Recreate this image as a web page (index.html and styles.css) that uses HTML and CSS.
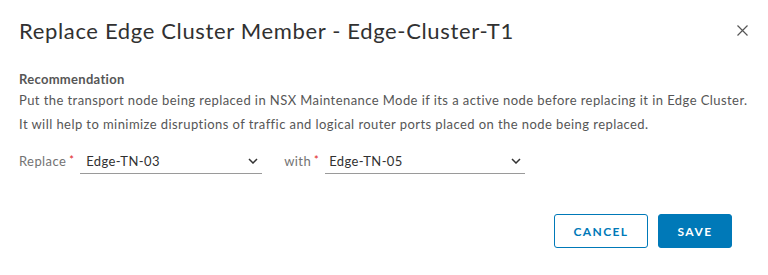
FILE: index.html
```html
<!DOCTYPE html>
<html lang="en">
<head>
  <meta charset="UTF-8">
  <title>Replace Edge Cluster Member</title>
  <link rel="stylesheet" href="styles.css">
</head>
<body>
  <div class="modal">
    <div class="modal-header">
      <h3 class="modal-title">Replace Edge Cluster Member - Edge-Cluster-T1</h3>
      <button class="close" aria-label="Close">
        <svg width="11" height="11" viewBox="0 0 11 11"><path d="M0.5 0.5L10.5 10.5M10.5 0.5L0.5 10.5" stroke="#565656" stroke-width="1.2" fill="none"/></svg>
      </button>
    </div>
    <div class="modal-body">
      <div class="rec-title">Recommendation</div>
      <p class="rec-text">Put the transport node being replaced in NSX Maintenance Mode if its a active node before replacing it in Edge Cluster.</p>
      <p class="rec-text">It will help to minimize disruptions of traffic and logical router ports placed on the node being replaced.</p>
      <div class="form-row">
        <label class="label">Replace<span class="req">*</span></label>
        <div class="select select-first">
          <span>Edge-TN-03</span>
          <svg width="10" height="6" viewBox="0 0 10 6"><path d="M1 1L5 5L9 1" stroke="#333" stroke-width="1.5" fill="none"/></svg>
        </div>
        <label class="label label-with">with<span class="req">*</span></label>
        <div class="select select-second">
          <span>Edge-TN-05</span>
          <svg width="10" height="6" viewBox="0 0 10 6"><path d="M1 1L5 5L9 1" stroke="#333" stroke-width="1.5" fill="none"/></svg>
        </div>
      </div>
    </div>
    <div class="modal-footer">
      <button class="btn btn-outline">CANCEL</button>
      <button class="btn btn-primary">SAVE</button>
    </div>
  </div>
</body>
</html>
```

FILE: styles.css
```css
body{
  margin: 0;
  padding: 0;
  background: #fff;
  font-family: Lato, "Open Sans", sans-serif;
  color: #565656;
}
.modal{
  width: 768px;
  height: 275px;
  box-sizing: border-box;
  padding: 0 18px 0 19px;
}
.modal-header{
  display: flex;
  align-items: center;
  justify-content: space-between;
  height: 60px;
}
.modal-title{
  margin: 0;
  font-size: 22px;
  font-weight: 400;
  color: #313131;
  letter-spacing: 0.65px;
}
.close{
  border: none;
  background: none;
  padding: 0;
  margin-right: 2px;
  display: flex;
  cursor: pointer;
}
.modal-body{
  padding-top: 10px;
}
.rec-title{
  font-size: 13px;
  font-weight: 700;
  color: #565656;
  line-height: 18px;
  letter-spacing: 0.3px;
}
.rec-text{
  margin: 0;
  font-size: 13px;
  line-height: 24px;
  color: #565656;
  letter-spacing: 0.43px;
  white-space: nowrap;
}
.form-row{
  display: flex;
  align-items: center;
  margin-top: 12px;
  font-size: 13px;
  letter-spacing: 0.4px;
}
.label{
  color: #737373;
  margin-right: 6px;
}
.req{
  color: #e02020;
  font-size: 11px;
  margin-left: 3px;
  vertical-align: top;
}
.label-with{
  margin-left: 22px;
}
.select{
  display: flex;
  align-items: center;
  justify-content: space-between;
  height: 26px;
  padding: 0 4px 0 6px;
  border-bottom: 1px solid #9a9a9a;
  color: #313131;
  box-sizing: border-box;
}
.select-first{
  width: 182px;
}
.select-second{
  width: 200px;
  padding-left: 4px;
}
.modal-footer{
  display: flex;
  justify-content: flex-end;
  gap: 10px;
  margin-top: 40px;
  padding-right: 18px;
}
.btn{
  height: 34px;
  padding: 0;
  border-radius: 3px;
  font-family: inherit;
  font-size: 12px;
  font-weight: 700;
  letter-spacing: 1.4px;
  cursor: pointer;
}
.btn-outline{
  width: 94px;
  background: #fff;
  border: 1px solid #0079b8;
  color: #0079b8;
}
.btn-primary{
  width: 74px;
  background: #0079b8;
  border: 1px solid #0079b8;
  color: #fff;
}
```
